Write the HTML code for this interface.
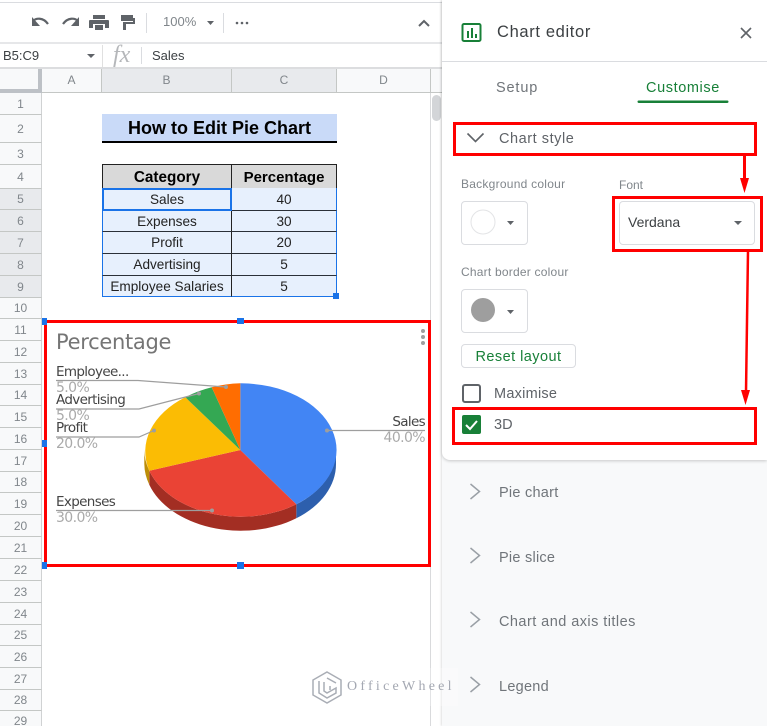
<!DOCTYPE html>
<html><head><meta charset="utf-8">
<style>
html,body{margin:0;padding:0;background:#fff}
#p{position:relative;width:767px;height:726px;overflow:hidden;background:#fff;font-family:"Liberation Sans",sans-serif;color:#3c4043;filter:blur(.35px)}
#p div{position:absolute;box-sizing:border-box}
.t{white-space:nowrap;line-height:1}
.rh{left:0;width:42px;background:#f8f9fa;border-bottom:1px solid #c4c7c5;border-right:1px solid #d0d2d3;text-align:center;color:#80868b;font-size:12px;display:flex;align-items:center;justify-content:center}
.rs{background:#e8eaed}
.ch{top:69px;height:24px;padding-bottom:2px;background:#f8f9fa;border-right:1px solid #c4c7c5;border-bottom:1px solid #c4c7c5;color:#80868b;font-size:12px;display:flex;align-items:center;justify-content:center}
.cs{background:#e8eaed}
.c{display:flex;align-items:center;justify-content:center;font-size:13.600px;color:#222;background:#e7f0fd;border-bottom:1px solid #2b3038;white-space:nowrap}
.red{border:3px solid #f00}
.h{background:#1a73e8;width:7px;height:7px}
.lb{font-size:13.500px;color:#444;font-family:"DejaVu Sans","Liberation Sans",sans-serif;letter-spacing:-.65px}
.pc{font-size:14px;color:#aaa;font-family:"DejaVu Sans","Liberation Sans",sans-serif;letter-spacing:-.6px}
.sec{left:499px;font-size:14.500px;color:#70757a;letter-spacing:.05px}
</style></head><body><div id="p">

<!-- toolbar -->
<div style="left:0;top:2px;width:442px;height:1px;background:#dadce0"></div>
<svg style="position:absolute;left:0;top:0" width="442" height="69">
<g fill="none" stroke="#5f6368" stroke-width="2.2">
<path d="M33 21c3-3 10-4 15 3"/><path d="M78 21c-3-3-10-4-15 3"/>
</g>
<path d="M32 17v9h8z" fill="#5f6368"/><path d="M79 17v9h-8z" fill="#5f6368"/>
<path d="M93 15h12v4h-12zM90 20h18q1 0 1 1v7h-4v-4h-12v4h-4v-7q0-1 1-1zM95 25h8v5h-8z" fill="#5f6368"/>
<path d="M121 15h12v6h-12zM133 18h2v6h-9v6h-3v-8h10z" fill="#5f6368"/>
<rect x="146" y="13" width="1" height="20" fill="#dadce0"/>
<rect x="223" y="13" width="1" height="20" fill="#dadce0"/>
<path d="M207 21h7l-3.500 4z" fill="#5f6368"/>
<circle cx="237" cy="23" r="1.300" fill="#5f6368"/><circle cx="242" cy="23" r="1.300" fill="#5f6368"/><circle cx="247" cy="23" r="1.300" fill="#5f6368"/>
<path d="M419 26l5-5 5 5" fill="none" stroke="#5f6368" stroke-width="2"/>
<rect x="0" y="42" width="442" height="2" fill="#e6e7e9"/>
<rect x="0" y="67" width="442" height="2" fill="#dcdddf"/>
<rect x="102" y="45" width="1" height="22" fill="#e0e0e0"/>
<rect x="141" y="47" width="1" height="17" fill="#dadce0"/>
<path d="M87 54h8l-4 4z" fill="#5f6368"/>
</svg>
<div class="t" style="left:163px;top:15px;font-size:13px;color:#80868b">100%</div>
<div class="t" style="left:3px;top:49px;font-size:13px;color:#3c4043">B5:C9</div>
<div class="t" style="left:113px;top:43px;font-size:24px;color:#b5b7ba;font-family:'Liberation Serif',serif;font-style:italic">fx</div>
<div class="t" style="left:152px;top:49px;font-size:13px;color:#3c4043">Sales</div>

<!-- col headers -->
<div class="ch" style="left:0;width:42px;border-right:4px solid #bdc1c6;border-bottom:4px solid #bdc1c6"></div>
<div class="ch" style="left:42px;width:60px">A</div>
<div class="ch cs" style="left:102px;width:130px">B</div>
<div class="ch cs" style="left:232px;width:105px">C</div>
<div class="ch" style="left:337px;width:94px">D</div>
<div class="ch" style="left:431px;width:11px;border-right:0"></div>

<!-- row headers -->
<div class="rh" style="top:93px;height:22px">1</div>
<div class="rh" style="top:115px;height:28px">2</div>
<div class="rh" style="top:143px;height:22px">3</div>
<div class="rh" style="top:165px;height:24px">4</div>
<div class="rh rs" style="top:189px;height:21px">5</div>
<div class="rh rs" style="top:210px;height:22px">6</div>
<div class="rh rs" style="top:232px;height:22px">7</div>
<div class="rh rs" style="top:254px;height:22px">8</div>
<div class="rh rs" style="top:276px;height:22px">9</div>
<div class="rh" style="top:298px;height:21px">10</div>
<div class="rh" style="top:319px;height:22px">11</div>
<div class="rh" style="top:341px;height:22px">12</div>
<div class="rh" style="top:363px;height:22px">13</div>
<div class="rh" style="top:385px;height:21px">14</div>
<div class="rh" style="top:406px;height:22px">15</div>
<div class="rh" style="top:428px;height:22px">16</div>
<div class="rh" style="top:450px;height:22px">17</div>
<div class="rh" style="top:472px;height:21px">18</div>
<div class="rh" style="top:493px;height:22px">19</div>
<div class="rh" style="top:515px;height:22px">20</div>
<div class="rh" style="top:537px;height:22px">21</div>
<div class="rh" style="top:559px;height:22px">22</div>
<div class="rh" style="top:581px;height:22px">23</div>
<div class="rh" style="top:603px;height:22px">24</div>
<div class="rh" style="top:625px;height:21px">25</div>
<div class="rh" style="top:646px;height:22px">26</div>
<div class="rh" style="top:668px;height:22px">27</div>
<div class="rh" style="top:690px;height:21px">28</div>
<div class="rh" style="top:711px;height:21px">29</div>

<!-- grid scrollbar -->
<div style="left:430px;top:93px;width:1px;height:633px;background:#d9dadc"></div>
<div style="left:432px;top:95px;width:9px;height:26px;background:#d3d5d8;border-radius:5px"></div>

<!-- title -->
<div style="left:102px;top:114px;width:235px;height:29px;background:#c9daf8;border-bottom:2px solid #000;text-align:center;font-weight:bold;font-size:18px;line-height:29px;color:#000">How to Edit Pie Chart</div>

<!-- table -->
<div class="c" style="left:102px;top:164px;width:130px;height:25px;padding-top:2px;background:#d9d9d9;border:1px solid #222;border-bottom:1px solid #333;font-weight:bold;font-size:15.300px;color:#000">Category</div>
<div class="c" style="left:231px;top:164px;width:106px;height:25px;padding-top:1px;background:#d9d9d9;border:1px solid #222;border-bottom:1px solid #333;font-weight:bold;font-size:15px;color:#000">Percentage</div>
<div class="c" style="left:102px;top:188px;width:130px;height:23px;border:2px solid #1a73e8;background:#e7f0fd">Sales</div>
<div class="c" style="left:232px;top:188px;width:105px;height:23px;border-right:1px solid #1a73e8">40</div>
<div class="c" style="left:102px;top:211px;width:130px;height:21px;border-left:1px solid #1a73e8;border-right:1px solid #222">Expenses</div>
<div class="c" style="left:232px;top:211px;width:105px;height:21px;border-right:1px solid #1a73e8">30</div>
<div class="c" style="left:102px;top:232px;width:130px;height:22px;border-left:1px solid #1a73e8;border-right:1px solid #222">Profit</div>
<div class="c" style="left:232px;top:232px;width:105px;height:22px;border-right:1px solid #1a73e8">20</div>
<div class="c" style="left:102px;top:254px;width:130px;height:22px;border-left:1px solid #1a73e8;border-right:1px solid #222">Advertising</div>
<div class="c" style="left:232px;top:254px;width:105px;height:22px;border-right:1px solid #1a73e8">5</div>
<div class="c" style="left:102px;top:276px;width:130px;height:21px;border-left:1px solid #1a73e8;border-right:1px solid #222;border-bottom:1px solid #1a73e8">Employee Salaries</div>
<div class="c" style="left:232px;top:276px;width:105px;height:21px;border-right:1px solid #1a73e8;border-bottom:1px solid #1a73e8">5</div>
<div class="h" style="left:333px;top:293px;width:6px;height:6px"></div>

<!-- chart -->
<svg style="position:absolute;left:0;top:0" width="442" height="726">
<path d="M296.300 504.300A96 66.700 0 0 0 336 450V464A96 66.700 0 0 1 296.300 518.300Z" fill="#2d5fad"/>
<path d="M149.300 470.700A96 66.700 0 0 0 296.300 504.300V518.300A96 66.700 0 0 1 149.300 484.700Z" fill="#a32e23"/>
<path d="M144.300 450A96 66.700 0 0 0 149.300 470.700V484.700A96 66.700 0 0 1 144.300 464Z" fill="#bd8e08"/>
<path d="M240.300 450V383.300A96 66.700 0 0 1 296.300 504.300Z" fill="#4285f4"/>
<path d="M240.300 450L296.300 504.300A96 66.700 0 0 1 149.300 470.700Z" fill="#ea4335"/>
<path d="M240.300 450L149.300 470.700A96 66.700 0 0 1 185.300 397.300Z" fill="#fbbc04"/>
<path d="M240.300 450L185.300 397.300A96 66.700 0 0 1 211.700 387.300Z" fill="#34a853"/>
<path d="M240.300 450L211.700 387.300A96 66.700 0 0 1 240.300 383.300Z" fill="#ff6d01"/>
<g fill="none" stroke="#9e9e9e" stroke-width="1.200">
<path d="M56 380.500H138L226 387"/>
<path d="M56 409H139L199 393.500"/>
<path d="M56 437H139L154 430.500"/>
<path d="M56 510.500H140L212 510.500"/>
<path d="M327 430.500H425"/>
</g>
<g fill="#9e9e9e">
<circle cx="226" cy="387" r="2"/><circle cx="199" cy="393.500" r="2"/><circle cx="154" cy="430.500" r="2"/><circle cx="212" cy="510.500" r="2"/><circle cx="327" cy="430.500" r="2"/>
<circle cx="423" cy="331" r="2"/><circle cx="423" cy="337" r="2"/><circle cx="423" cy="343" r="2"/>
</g>
</svg>
<div class="t" style="left:56px;top:332px;font-size:21px;color:#757575;font-family:'DejaVu Sans',sans-serif;letter-spacing:-.3px">Percentage</div>
<div class="t lb" style="left:56px;top:366px">Employee...</div>
<div class="t pc" style="left:56px;top:381px">5.0%</div>
<div class="t lb" style="left:56px;top:394px">Advertising</div>
<div class="t pc" style="left:56px;top:409px">5.0%</div>
<div class="t lb" style="left:56px;top:422px">Profit</div>
<div class="t pc" style="left:56px;top:437px">20.0%</div>
<div class="t lb" style="left:56px;top:496px">Expenses</div>
<div class="t pc" style="left:56px;top:511px">30.0%</div>
<div class="t lb" style="right:342px;top:416px">Sales</div>
<div class="t pc" style="right:342px;top:431px">40.0%</div>

<div class="red" style="left:44px;top:320px;width:387px;height:247px"></div>
<div class="h" style="left:42px;top:318px;width:5px;height:7px"></div>
<div class="h" style="left:237px;top:318px;height:6px"></div>
<div class="h" style="left:42px;top:440px;width:5px"></div>
<div class="h" style="left:42px;top:562px;width:5px"></div>
<div class="h" style="left:237px;top:562px"></div>

<!-- panel -->
<div style="left:442px;top:0;width:325px;height:726px;background:#f8f9fa;box-shadow:-1px 0 2px rgba(0,0,0,.12)"></div>
<div style="left:442px;top:0;width:325px;height:460px;background:#fff;border-radius:0 0 0 8px;box-shadow:0 1px 3px rgba(0,0,0,.2)"></div>
<div style="left:442px;top:61px;width:325px;height:1px;background:#dadce0"></div>

<svg style="position:absolute;left:442px;top:0" width="325" height="726">
<rect x="20.500" y="24" width="18" height="17" rx="1.500" fill="none" stroke="#188038" stroke-width="2"/>
<path d="M25 31h2v7h-2zM29 28h2v10h-2zM33 34h2v4h-2z" fill="#188038"/>
<path d="M299 28l10 10M309 28l-10 10" stroke="#5f6368" stroke-width="1.600" fill="none"/>
<rect x="195.500" y="100.500" width="91" height="2.500" rx="1.200" fill="#188038"/>
<path d="M25.500 133.500l8 8 8-8" fill="none" stroke="#5f6368" stroke-width="1.600"/>
<path d="M65 221h7l-3.500 4z" fill="#5f6368"/>
<path d="M292 221h8l-4 4z" fill="#5f6368"/>
<path d="M65 310h7l-3.500 4z" fill="#5f6368"/>
<circle cx="41" cy="222" r="12" fill="#fff" stroke="#e3e4e6"/>
<circle cx="41" cy="310" r="12" fill="#9e9e9e"/>
<g fill="none" stroke="#9aa0a6" stroke-width="1.500">
<path d="M28.500 484l9 7.500-9 7.500"/><path d="M28.500 548l9 7.500-9 7.500"/><path d="M28.500 612l9 7.500-9 7.500"/><path d="M28.500 677l9 7.500-9 7.500"/>
</g>
<rect x="21" y="385" width="17" height="17" rx="2" fill="none" stroke="#5f6368" stroke-width="2"/>
<rect x="20" y="415" width="19" height="19" rx="2" fill="#188038"/>
<path d="M24 425l4 4 7-8" fill="none" stroke="#fff" stroke-width="2"/>
</svg>
<div class="t" style="left:497px;top:24px;font-size:16.500px;color:#3c4043;letter-spacing:.65px">Chart editor</div>
<div class="t" style="left:496px;top:81px;font-size:14.500px;color:#70757a;letter-spacing:.85px">Setup</div>
<div class="t" style="left:646px;top:81px;font-size:14.500px;color:#188038;letter-spacing:.6px">Customise</div>
<div class="t" style="left:499px;top:132px;font-size:14.500px;color:#5f6368;letter-spacing:.55px">Chart style</div>
<div class="t" style="left:461px;top:178px;font-size:12px;color:#80868b;letter-spacing:.25px">Background colour</div>
<div class="t" style="left:619px;top:179px;font-size:12px;color:#80868b">Font</div>
<div style="left:461px;top:201px;width:67px;height:44px;border:1px solid #dadce0;border-radius:4px"></div>
<div style="left:619px;top:201px;width:136px;height:44px;border:1px solid #dadce0;border-radius:4px"></div>
<div class="t" style="left:628px;top:215px;font-size:14px;color:#3c4043">Verdana</div>
<div class="t" style="left:461px;top:266px;font-size:12px;color:#80868b;letter-spacing:.22px">Chart border colour</div>
<div style="left:461px;top:289px;width:67px;height:44px;border:1px solid #dadce0;border-radius:4px"></div>
<div style="left:461px;top:344px;width:115px;height:24px;border:1px solid #dadce0;border-radius:4px;text-align:center;font-size:14.500px;line-height:24px;color:#188038;letter-spacing:.45px">Reset layout</div>
<div class="t" style="left:494px;top:387px;font-size:14.500px;color:#5f6368;letter-spacing:.25px">Maximise</div>
<div class="t" style="left:494px;top:418px;font-size:14.500px;color:#5f6368">3D</div>
<div class="t sec" style="top:486px;letter-spacing:.25px">Pie chart</div>
<div class="t sec" style="top:551px;letter-spacing:.25px">Pie slice</div>
<div class="t sec" style="top:615px;letter-spacing:.45px">Chart and axis titles</div>
<div class="t sec" style="top:680px;letter-spacing:.25px">Legend</div>

<!-- watermark -->
<div style="left:308px;top:668px;width:150px;height:38px;background:rgba(255,255,255,.25)"></div>
<svg style="position:absolute;left:310px;top:668px" width="36" height="36" fill="none" stroke="#a9adb5" stroke-width="1.500">
<path d="M17 4l14 8v15l-14 8-14-8V12z"/><path d="M17 10l9 5M9 13v12l8 5 9-5v-5l-9 5-3-2v-9M20 18v4"/>
</svg>
<div class="t" style="left:347px;top:680px;font-size:14px;font-family:'Liberation Serif',serif;color:#a4a8b2;letter-spacing:3.250px">OfficeWheel</div>

<!-- red annotations -->
<div class="red" style="left:453px;top:122px;width:304px;height:34px"></div>
<div class="red" style="left:612px;top:196px;width:151px;height:56px"></div>
<div class="red" style="left:452px;top:407px;width:305px;height:38px"></div>
<svg style="position:absolute;left:0;top:0" width="767" height="726">
<path d="M744.500 155V180" stroke="#f00" stroke-width="3"/><path d="M740 178h9l-4.500 15z" fill="#f00"/>
<path d="M748 251L746 392" stroke="#f00" stroke-width="2.500"/><path d="M741 390h9l-4.500 15z" fill="#f00"/>
</svg>
</div></body></html>
